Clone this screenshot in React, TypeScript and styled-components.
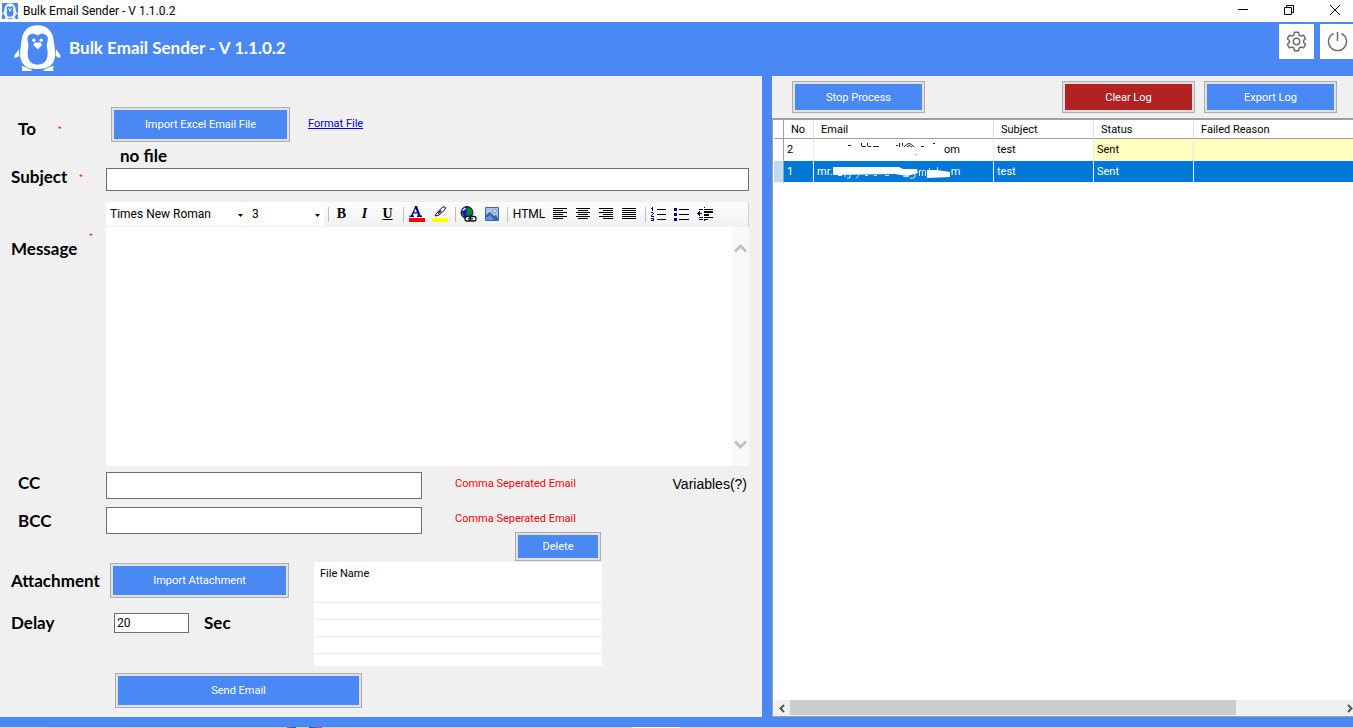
import React from "react";
import styled, { createGlobalStyle, css } from "styled-components";

const BLUE = "#4a89f3";
const PANEL = "#f0f0f0";
const UI = 'Roboto, "Liberation Sans", sans-serif';
const DISPLAY = 'Lato, "Liberation Sans", sans-serif';

const GlobalStyle = createGlobalStyle`
  *, *::before, *::after { box-sizing: border-box; }
  body { margin: 0; background: ${BLUE}; color: #000; font-family: ${UI}; font-size: 11px; }
  button, input, select, textarea { font: inherit; color: inherit; margin: 0; padding: 0; border: 0; border-radius: 0; }
  svg { display: block; }
`;

const Window = styled.div`
  min-height: 100vh;
  display: flex;
  flex-direction: column;
  overflow: hidden;
`;

/* ---------- title bar and header ---------- */
const TitleBar = styled.div`
  height: 22px;
  padding: 0 2px;
  display: flex;
  align-items: center;
  gap: 5px;
  background: #fff;
`;
const TitleText = styled.span`
  flex: 1;
  font-size: 12px;
  line-height: 20px;
`;
const AppIcon = styled.span`
  width: 16px;
  height: 16px;
  background: ${BLUE};
`;
const WindowButton = styled.button`
  width: 46px;
  height: 20px;
  display: grid;
  place-items: center;
  background: none;
`;
const WindowButtons = styled.div`
  display: flex;
  align-self: flex-start;
  margin-right: -7px;
`;

const Header = styled.header`
  height: 54px;
  padding: 2px 0 0 14px;
  display: flex;
  align-items: flex-start;
  gap: 6px;
`;
const Brand = styled.h1`
  flex: 1;
  margin: 0;
  padding-left: 2px;
  color: #fff;
  font: 700 17px/48px ${DISPLAY};
`;
const HeaderButton = styled.button`
  width: 35px;
  height: 35px;
  display: grid;
  place-items: center;
  background: #fff;
  &:last-child { margin-right: -2px; }
`;

/* ---------- shared pieces ---------- */
const Main = styled.main`
  flex: 1;
  display: grid;
  grid-template-columns: minmax(0, 762fr) minmax(0, 581fr);
  gap: 10px;
`;
const Button = styled.button<{ $w: number; $h?: number; $tone?: string }>`
  width: ${(p) => p.$w}px;
  height: ${(p) => p.$h ?? 35}px;
  flex: none;
  border: 1px solid #adadad;
  background: ${(p) => p.$tone ?? BLUE};
  box-shadow: inset 0 0 0 2px #e1e1e1;
  color: #fff;
`;
const StatusEdge = styled.div`
  height: 1px;
  margin-top: 10px;
  background: linear-gradient(90deg, #cfdff6 0 48px, #c3d2e8 48px 287px, #e2445c 287px 290px, #1f62d0 290px 296px,
    #c3d2e8 296px 309px, #1f62d0 309px 314px, #e2445c 318px 322px, #c3d2e8 322px 632px, #fff 632px 680px, #c9daf4 680px);
`;

/* ---------- compose form ---------- */
const Form = styled.form`
  display: flex;
  flex-direction: column;
  padding: 31px 13px 9px 0;
  background: ${PANEL};
`;
const Row = styled.div<{ $gap?: number; $grow?: boolean }>`
  display: grid;
  grid-template-columns: 106px minmax(0, 1fr);
  margin-top: ${(p) => p.$gap ?? 0}px;
  ${(p) => p.$grow && css`flex: 1;`}
`;
const Label = styled.label`
  font: 700 17px/18px ${DISPLAY};
  white-space: nowrap;
`;
const LabelCell = styled.div<{ $indent?: boolean; $space?: number; $align?: "top" | "raised" | "lowered" }>`
  display: flex;
  align-items: center;
  gap: ${(p) => p.$space ?? 12}px;
  padding-left: ${(p) => (p.$indent ? 18 : 11)}px;
  ${(p) => p.$align === "raised" && css`padding-bottom: 5px;`}
  ${(p) => p.$align === "lowered" && css`padding-top: 8px;`}
  ${(p) =>
    p.$align === "top" &&
    css`
      align-items: flex-start;
      padding-top: 28px;
      ${Label} { padding-top: 10px; }
    `}
`;
const Required = styled.span`
  color: #f00;
  font-size: 8px;
  line-height: 12px;
`;
const Inline = styled.div<{ $pad?: number; $space?: number }>`
  display: flex;
  align-items: center;
  gap: ${(p) => p.$space ?? 0}px;
  padding-left: ${(p) => p.$pad ?? 0}px;
`;
const FileState = styled.div`
  padding: 2px 0 0 14px;
  font: 700 17px/24px ${DISPLAY};
`;
const FormatLink = styled.a`
  color: #00f;
  line-height: 16px;
  padding-bottom: 2px;
`;
const TextBox = styled.input<{ $w?: number; $h: number }>`
  width: ${(p) => (p.$w ? `${p.$w}px` : "100%")};
  height: ${(p) => p.$h}px;
  padding: 0 2px;
  border: 1px solid #6e6e6e;
  background: #fff;
  font-size: 12px;
`;
const Hint = styled.span`
  flex: 1;
  padding: 0 0 4px 33px;
  color: #f00;
`;
const Variables = styled.span`
  padding: 0 2px 4px 0;
  font: 14px/16px "Liberation Sans", Arial, sans-serif;
`;

const Editor = styled.div`
  display: flex;
  flex-direction: column;
  min-height: 264px;
`;
const Toolbar = styled.div`
  height: 25px;
  padding-bottom: 1px;
  display: flex;
  align-items: center;
  background: linear-gradient(#fdfdfd, #f0f0f0);
  border-right: 1px solid #d0d0d0;
  border-radius: 3px 3px 0 0;
`;
const Picker = styled.div<{ $w: number }>`
  position: relative;
  width: ${(p) => p.$w}px;
  height: 23px;
  margin-right: 1px;
  background: #fff;
  select {
    width: 100%;
    height: 100%;
    padding-left: 4px;
    appearance: none;
    background: none;
    font-size: 12px;
  }
  svg { position: absolute; right: 4px; top: 11px; pointer-events: none; }
`;
const Sep = styled.span`
  width: 1px;
  height: 15px;
  margin: 0 1px 0 4px;
  background: #bdbdbd;
  ${Picker} + & { margin-left: 3px; }
`;
const Tool = styled.button<{ $w?: number }>`
  width: ${(p) => p.$w ?? 23}px;
  height: 23px;
  display: grid;
  place-items: center;
  background: none;
  font-size: 12px;
`;
const Glyph = styled.span<{ $kind: "b" | "i" | "u" }>`
  font: 700 14px/16px "Liberation Serif", serif;
  ${(p) => p.$kind === "i" && css`font-style: italic;`}
  ${(p) => p.$kind === "u" && css`text-decoration: underline;`}
`;
const EditorBody = styled.div`
  flex: 1;
  display: flex;
  background: #fff;
`;
const Message = styled.textarea`
  flex: 1;
  padding: 4px;
  resize: none;
  background: none;
`;
const VScroll = styled.div`
  width: 17px;
  padding: 17px 2px;
  display: flex;
  flex-direction: column;
  justify-content: space-between;
  background: #f9f9f9;
`;

const Lower = styled.div`
  display: grid;
  grid-template-columns: 314px 288px;
  margin-top: -2px;
`;
const LowerLeft = styled.div`
  padding-top: 31px;
`;
const LowerRight = styled.div`
  display: flex;
  flex-direction: column;
  align-items: flex-end;
  gap: 1px;
  button { margin-right: 1px; }
`;
const Files = styled.table`
  width: 100%;
  border-collapse: collapse;
  background: #fff;
  th { height: 40px; padding: 4px 6px; text-align: left; vertical-align: top; font-weight: 400; line-height: 16px; }
  td { height: 17px; padding: 0; border-top: 1px solid #ededed; }
  tr:last-child td { height: 13px; }
`;
const Seconds = styled.span`
  padding-left: 15px;
  font: 700 17px/18px ${DISPLAY};
`;
const SendRow = styled.div`
  padding: 7px 0 0 115px;
`;

/* ---------- log ---------- */
const LogPanel = styled.section`
  display: flex;
  flex-direction: column;
  background: #fff;
  border-bottom: 1px solid #a0a0a0;
`;
const LogBar = styled.div`
  height: 42px;
  display: flex;
  align-items: center;
  gap: 9px;
  padding: 0 16px 0 20px;
  background: ${PANEL};
  button:first-child { margin-right: auto; }
`;
const LogBody = styled.div`
  flex: 1;
  border: solid #a0a0a0;
  border-width: 2px 0 0 1px;
`;
const LogTable = styled.table`
  width: 100%;
  table-layout: fixed;
  border-collapse: separate;
  border-spacing: 0;
  padding-left: 1px;
  th, td { padding: 0 3px; text-align: left; font-weight: 400; white-space: nowrap; border-right: 1px solid #e5eef6; }
  th { height: 19px; padding: 0 7px; border-right-color: #e0e0e0; border-bottom: 1px solid #a0a0a0; }
  td { height: 22px; border-bottom: 1px solid #f4f8fc; }
  th:first-child, td:first-child { padding: 0; border-right-color: #a0a0a0; }
  th:last-child, td:last-child { border-right: 0; }
`;
const LogRow = styled.tr<{ $selected?: boolean }>`
  ${(p) =>
    p.$selected
      ? css`
          color: #fff;
          background: #0078d7;
          td { border-right-color: #fff; }
          td:first-child { background: #bcdcf4; }
        `
      : css`
          td:nth-child(n + 5) { background: #ffffc0; }
        `}
`;
const Masked = styled.div`
  display: flex;
  align-items: center;
  width: 141px;
  height: 20px;
  svg { flex: none; }
`;
const HScroll = styled.div`
  height: 16px;
  display: flex;
  align-items: center;
  border-left: 1px solid #a0a0a0;
  background: ${PANEL};
`;
const ScrollArrow = styled.button<{ $w: number }>`
  width: ${(p) => p.$w}px;
  height: 16px;
  display: grid;
  place-items: center;
  background: none;
`;
const Track = styled.div`
  flex: 1;
  height: 15px;
  align-self: flex-start;
`;
const Thumb = styled.div`
  width: 80%;
  height: 100%;
  background: #cdcdcd;
`;

/* ---------- drawings ---------- */
const Penguin = ({ w, h }: { w: number; h: number }) => (
  <svg width={w} height={h} viewBox="41 71 142 142" preserveAspectRatio="none" fill="#fff" aria-hidden="true">
    <path
      fillRule="evenodd"
      d="M112 75C140 75 158 93 161 120L165 150C168 176 160 192 145 201C134 209 90 209 80 201C65 192 57 176 60 150L64 120C67 93 84 75 112 75ZM112 106C103 98 86 98 82 112C80 122 87 130 84 143C78 175 88 194 112 194C137 194 147 175 141 143C138 130 145 122 143 112C139 98 121 98 112 106Z"
    />
    <circle cx="101" cy="120" r="5" />
    <circle cx="123" cy="120" r="5" />
    <path d="M104 127H121L126 134L113 148L99 134Z" />
    <path d="M56 147L57 168L45 174Q39 171 44 163ZM168 147L167 168L178 174Q184 171 180 163Z" />
    <path d="M64 197L74 201L96 210L92 213H67Q62 211 66 206ZM161 197L151 201L129 210L133 213H158Q163 211 159 206Z" />
  </svg>
);
const Gear = () => (
  <svg width="21" height="21" viewBox="0 0 24 24" fill="none" stroke="#6c6c6c" strokeWidth="1.7" strokeLinejoin="round">
    <path d="M9.7 1.5h4.6l.7 3.1 2.1 1.2 3-1 2.3 4-2.3 2.1v2.3l2.3 2.1-2.3 4-3-1-2.1 1.2-.7 3.1H9.7L9 19.5l-2.1-1.2-3 1-2.3-4 2.3-2.1v-2.3L1.600 8.800l2.300-4 3 1L9 4.600Z" />
    <circle cx="12" cy="12" r="3.700" />
  </svg>
);
const Power = () => (
  <svg width="21" height="21" viewBox="0 0 21 21" fill="none" stroke="#6c6c6c" strokeWidth="1.500">
    <path d="M6.500 2.500A9 9 0 1 0 14.500 2.500M10.500 1V10" />
  </svg>
);
const Caret = () => (
  <svg width="5" height="3" viewBox="0 0 5 3"><path d="M0 0H5L2.500 3Z" /></svg>
);
const Chevron = ({ up }: { up?: boolean }) => (
  <svg width="13" height="9" viewBox="0 0 13 9" fill="none" stroke="#c1c1c1" strokeWidth="3">
    <path d={up ? "M1 7.500L6.500 2L12 7.500" : "M1 1.500L6.500 7L12 1.500"} />
  </svg>
);
const SideChevron = ({ right }: { right?: boolean }) => (
  <svg width="6" height="9" viewBox="0 0 6 9" fill="none" stroke="#555" strokeWidth="2">
    <path d={right ? "M1 1L4.500 4.500L1 8" : "M5 1L1.500 4.500L5 8"} />
  </svg>
);
const Lines = ({ rows }: { rows: [number, number][] }) => (
  <svg width="15" height="12" viewBox="0 0 15 12" shapeRendering="crispEdges">
    {rows.map(([x, w], i) => (
      <rect key={i} x={x} y={i * 2} width={w} height="1" />
    ))}
  </svg>
);
const ALIGN: Record<string, [number, number][]> = {
  Left: [[0, 14], [0, 10], [0, 14], [0, 10], [0, 14], [0, 10]],
  Center: [[0, 14], [2, 10], [0, 14], [2, 10], [0, 14], [2, 10]],
  Right: [[0, 14], [4, 10], [0, 14], [4, 10], [0, 14], [4, 10]],
  Justify: [[0, 14], [0, 14], [0, 14], [0, 14], [0, 14], [0, 14]],
};
const FontColor = () => (
  <svg width="16" height="16" viewBox="0 0 16 16">
    <path fill="#000080" fillRule="evenodd" d="M6 0H8L11.500 9.500H13V11H8V9.500H9.300L8.500 7.500H4.500L3.800 9.500H5V11H.5V9.500H2L5.500 2ZM6.500 2.500L5 6.300H8Z" />
    <path fill="#f00" d="M0 12H16V16H0Z" />
  </svg>
);
const Highlighter = () => (
  <svg width="16" height="16" viewBox="0 0 16 16">
    <path fill="#fff" stroke="#111" d="M4 8L10 1.500Q12 0 13.500 1.500L13 3.500L7 9L3 10Z" />
    <path stroke="#123a9a" strokeWidth="2" d="M6 7.500L9 4.500" />
    <path fill="#ff0" d="M0 12H16V16H0Z" />
  </svg>
);
const Globe = () => (
  <svg width="17" height="17" viewBox="0 0 17 17">
    <circle cx="7" cy="6.500" r="6" fill="#0a1ed0" stroke="#222" />
    <path fill="#0a8a1a" d="M6 3L9 1.500L12 4L12.500 7L9 10L6 9L7 6ZM2 7L4 9L4 11L2 9Z" />
    <path fill="#d8f0ff" d="M2 4L5 1.500L6 3L3 5Z" />
    <g fill="#fff" stroke="#111" strokeWidth="1.300">
      <rect x="5" y="10.500" width="6" height="4.500" rx="2" />
      <rect x="10" y="10.500" width="6" height="4.500" rx="2" />
      <path d="M8 12.800H13" />
    </g>
  </svg>
);
const Picture = () => (
  <svg width="14" height="14" viewBox="0 0 14 14">
    <path fill="#a9c4ea" stroke="#3c66a8" d="M.5 .5H13.500V13.500H.5Z" />
    <path fill="#3565b0" d="M1 8L5 5L9 9L11 8L13 11V13H1Z" />
    <path fill="#6e95d2" d="M1 11L5 8L9 13H1Z" />
    <circle cx="9.500" cy="4" r="1.700" fill="#fff" stroke="#4b72b4" strokeWidth=".8" />
  </svg>
);
const Numbered = () => (
  <svg width="15" height="14" viewBox="0 0 15 14" shapeRendering="crispEdges">
    <path d="M6 2H15V3H6ZM6 7H15V8H6ZM6 12H15V13H6Z" />
    <path fill="#000080" d="M1 0H2V4H1ZM0 1H1V2H0ZM0 5H2V6H3V7H2V8H1V9H3V10H0V8H1V7H2V6H0ZM0 11H3V14H0V13H2V12H0Z" />
  </svg>
);
const Bulleted = () => (
  <svg width="15" height="14" viewBox="0 0 15 14" shapeRendering="crispEdges">
    <path d="M5 2H15V3H5ZM5 7H15V8H5ZM5 12H15V13H5Z" />
    <path fill="#000080" d="M0 1H3V4H0ZM0 6H3V9H0ZM0 11H3V14H0Z" />
  </svg>
);
const Outdent = () => (
  <svg width="16" height="14" viewBox="0 0 16 14" shapeRendering="crispEdges">
    <path d="M2 2H6V3H2ZM7 2H16V3H7ZM7 4H16V6H7ZM7 7H12V9H7ZM2 10H6V11H2ZM7 10H16V11H7ZM2 12H6V13H2ZM7 12H11V13H7ZM7 0H8V1H7ZM7 13H8V14H7Z" />
    <path fill="#000080" d="M0 6H1V5H2V4H3V6H5V7H3V9H2V8H1V7H0Z" />
  </svg>
);

const SentMask = () => (
  <Masked>
    <svg width="127" height="16" viewBox="0 0 127 16" fill="none" stroke="#222" shapeRendering="crispEdges">
      <path d="M31 3.500H34M44.500 1V4M50.500 1V4M45 4.500H49M51 4.500H54M56 4.500H62M79 3.500H81M82.500 1V5M85.500 1V4M104 4.500H107M116 1.500H118" />
      <path d="M87 5Q92 -2 97 5M90 5Q92 2 95 5" shapeRendering="auto" />
      <path stroke="#7cc8f4" d="M98 12.500H100" />
    </svg>
    om
  </Masked>
);
const SelectedMask = () => (
  <Masked>
    mr.
    <svg width="118" height="16" viewBox="0 0 118 16" fill="#fff">
      <path d="M0 3L66 3L70 5H84L85 9L74 12L62 10L0 11Z" />
      <path d="M94 6H104L117 8V13L94 14Z" />
      <path
        fill="none"
        stroke="#e4f0fb"
        d="M5 11.500H9M12 11V13M17 11V14H14M26 11L23 14.500M32 11.500H35M41 11.500H44M52 11.500H56M70 12Q73 14 76 12M82 9V13Q80 15 77 14M86.500 6V12M86.500 7Q89.500 5 89.500 8V12M89.500 7Q92.500 5 92.500 8V12M96.500 6V4M104.500 3V6"
      />
    </svg>
    m
  </Masked>
);

const LOG = [
  { no: 2, email: <SentMask />, subject: "test", status: "Sent", reason: "", selected: false },
  { no: 1, email: <SelectedMask />, subject: "test", status: "Sent", reason: "", selected: true },
];

export default function App() {
  return (
    <Window>
      <GlobalStyle />
      <TitleBar>
        <AppIcon><Penguin w={16} h={16} /></AppIcon>
        <TitleText>Bulk Email Sender - V 1.1.0.2</TitleText>
        <WindowButtons>
          <WindowButton aria-label="Minimize">
            <svg width="10" height="10" viewBox="0 0 10 10"><path d="M0 4H10V5H0Z" /></svg>
          </WindowButton>
          <WindowButton aria-label="Restore">
            <svg width="10" height="10" viewBox="0 0 10 10" fill="none" stroke="#000">
              <path d="M.5 2.500H7.500V9.500H.5ZM2.500 2V.5H9.500V7.500H8" />
            </svg>
          </WindowButton>
          <WindowButton aria-label="Close">
            <svg width="10" height="10" viewBox="0 0 10 10" stroke="#000"><path d="M0 0L10 10M10 0L0 10" /></svg>
          </WindowButton>
        </WindowButtons>
      </TitleBar>

      <Header>
        <Penguin w={47} h={47} />
        <Brand>Bulk Email Sender - V 1.1.0.2</Brand>
        <HeaderButton aria-label="Settings"><Gear /></HeaderButton>
        <HeaderButton aria-label="Exit"><Power /></HeaderButton>
      </Header>

      <Main>
        <Form onSubmit={(e) => e.preventDefault()}>
          <Row>
            <LabelCell $indent $space={22} $align="lowered">
              <Label htmlFor="import">To</Label>
              <Required>*</Required>
            </LabelCell>
            <Inline $pad={5} $space={18}>
              <Button id="import" type="button" $w={179}>Import Excel Email File</Button>
              <FormatLink href="#format">Format File</FormatLink>
            </Inline>
          </Row>
          <Row>
            <span />
            <FileState>no file</FileState>
          </Row>
          <Row>
            <LabelCell $align="raised">
              <Label htmlFor="subject">Subject</Label>
              <Required>*</Required>
            </LabelCell>
            <TextBox id="subject" $h={23} />
          </Row>
          <Row $gap={11} $grow>
            <LabelCell $align="top">
              <Label htmlFor="message">Message</Label>
              <Required>*</Required>
            </LabelCell>
            <Editor>
              <Toolbar>
                <Picker $w={141}>
                  <select aria-label="Font"><option>Times New Roman</option></select>
                  <Caret />
                </Picker>
                <Picker $w={76}>
                  <select aria-label="Font size"><option>3</option></select>
                  <Caret />
                </Picker>
                <Sep />
                <Tool type="button"><Glyph $kind="b">B</Glyph></Tool>
                <Tool type="button"><Glyph $kind="i">I</Glyph></Tool>
                <Tool type="button"><Glyph $kind="u">U</Glyph></Tool>
                <Sep />
                <Tool type="button" aria-label="Text color"><FontColor /></Tool>
                <Tool type="button" aria-label="Highlight"><Highlighter /></Tool>
                <Sep />
                <Tool type="button" aria-label="Insert link"><Globe /></Tool>
                <Tool type="button" aria-label="Insert image"><Picture /></Tool>
                <Sep />
                <Tool type="button" $w={40}>HTML</Tool>
                {Object.entries(ALIGN).map(([name, rows]) => (
                  <Tool key={name} type="button" aria-label={`Align ${name}`}><Lines rows={rows} /></Tool>
                ))}
                <Sep />
                <Tool type="button" aria-label="Numbered list"><Numbered /></Tool>
                <Tool type="button" aria-label="Bulleted list"><Bulleted /></Tool>
                <Tool type="button" aria-label="Outdent"><Outdent /></Tool>
              </Toolbar>
              <EditorBody>
                <Message id="message" />
                <VScroll><Chevron up /><Chevron /></VScroll>
              </EditorBody>
            </Editor>
          </Row>
          <Row $gap={6}>
            <LabelCell $indent $align="raised"><Label htmlFor="cc">CC</Label></LabelCell>
            <Inline>
              <TextBox id="cc" $w={316} $h={27} />
              <Hint>Comma Seperated Email</Hint>
              <Variables>Variables(?)</Variables>
            </Inline>
          </Row>
          <Row $gap={8}>
            <LabelCell $indent><Label htmlFor="bcc">BCC</Label></LabelCell>
            <Inline>
              <TextBox id="bcc" $w={316} $h={27} />
              <Hint>Comma Seperated Email</Hint>
            </Inline>
          </Row>
          <Lower>
            <LowerLeft>
              <Row>
                <LabelCell><Label htmlFor="attach">Attachment</Label></LabelCell>
                <Inline $pad={4}>
                  <Button id="attach" type="button" $w={179}>Import Attachment</Button>
                </Inline>
              </Row>
              <Row $gap={15}>
                <LabelCell><Label htmlFor="delay">Delay</Label></LabelCell>
                <Inline $pad={8}>
                  <TextBox id="delay" $w={75} $h={20} defaultValue="20" />
                  <Seconds>Sec</Seconds>
                </Inline>
              </Row>
            </LowerLeft>
            <LowerRight>
              <Button type="button" $w={86} $h={29}>Delete</Button>
              <Files>
                <thead><tr><th>File Name</th></tr></thead>
                <tbody>
                  {[0, 1, 2, 3].map((i) => <tr key={i}><td /></tr>)}
                </tbody>
              </Files>
            </LowerRight>
          </Lower>
          <SendRow><Button type="submit" $w={247}>Send Email</Button></SendRow>
        </Form>

        <LogPanel>
          <LogBar>
            <Button $w={133} $h={32}>Stop Process</Button>
            <Button $w={133} $h={32} $tone="#b22222">Clear Log</Button>
            <Button $w={133} $h={32}>Export Log</Button>
          </LogBar>
          <LogBody>
            <LogTable>
              <colgroup>
                <col width="10" /><col width="30" /><col width="180" /><col width="100" /><col width="100" /><col />
              </colgroup>
              <thead>
                <tr><th /><th>No</th><th>Email</th><th>Subject</th><th>Status</th><th>Failed Reason</th></tr>
              </thead>
              <tbody>
                {LOG.map((r) => (
                  <LogRow key={r.no} $selected={r.selected}>
                    <td /><td>{r.no}</td><td>{r.email}</td><td>{r.subject}</td><td>{r.status}</td><td>{r.reason}</td>
                  </LogRow>
                ))}
              </tbody>
            </LogTable>
          </LogBody>
          <HScroll>
            <ScrollArrow $w={17} aria-label="Scroll left"><SideChevron /></ScrollArrow>
            <Track><Thumb /></Track>
            <ScrollArrow $w={6} aria-label="Scroll right"><SideChevron right /></ScrollArrow>
          </HScroll>
        </LogPanel>
      </Main>
      <StatusEdge />
    </Window>
  );
}
